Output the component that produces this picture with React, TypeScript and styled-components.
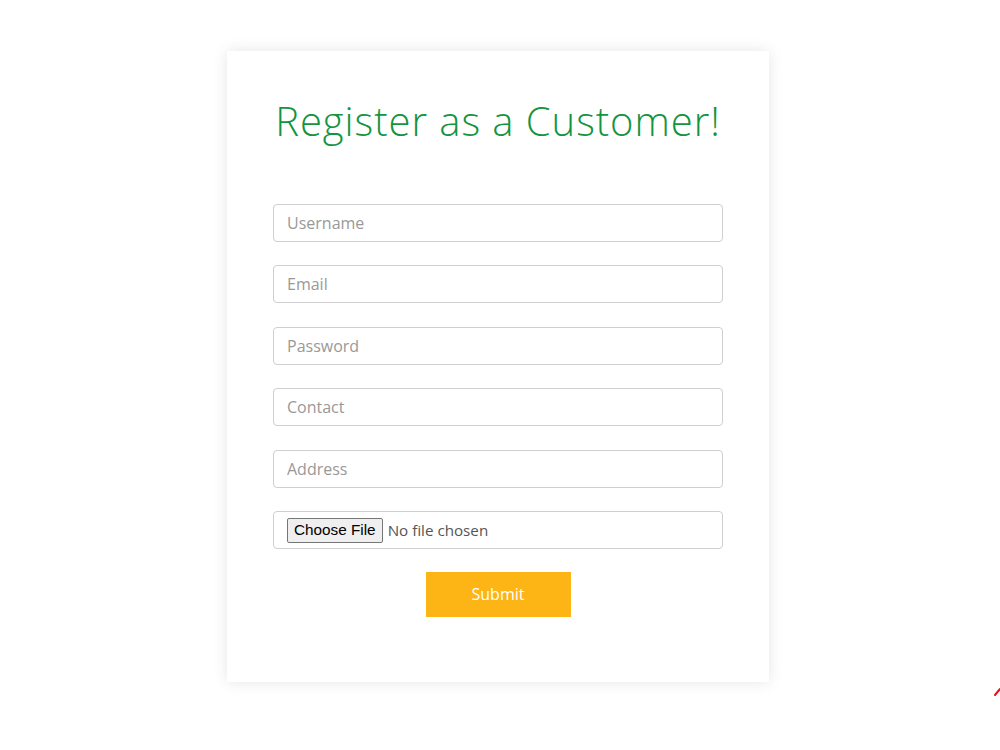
import React from 'react';
import styled, { createGlobalStyle } from 'styled-components';

const GlobalStyle = createGlobalStyle`
  html, body {
    margin: 0;
    padding: 0;
    background: #fff;
    font-family: "Open Sans", "Liberation Sans", sans-serif;
  }
`;

const Page = styled.div`
  position: relative;
  width: 1000px;
  height: 750px;
  overflow: hidden;
  display: flex;
  justify-content: center;
  align-items: flex-start;
  padding-top: 51px;
  padding-right: 4px;
  box-sizing: border-box;
`;

const Card = styled.div`
  width: 542px;
  height: 631px;
  box-sizing: border-box;
  background: #fff;
  box-shadow: 0 0 14px rgba(0, 0, 0, 0.1);
  padding: 46px 46px 0;
  display: flex;
  flex-direction: column;
`;

const Title = styled.h1`
  margin: 0 0 59px;
  text-align: center;
  font-family: "Open Sans", sans-serif;
  font-weight: 300;
  font-size: 40px;
  line-height: 48px;
  color: #14943f;
  letter-spacing: 0.95px;
`;

const Form = styled.form`
  display: flex;
  flex-direction: column;
  gap: 23.4px;
`;

const Input = styled.input`
  width: 100%;
  height: 38px;
  box-sizing: border-box;
  border: 1px solid #cfcfcf;
  border-radius: 4px;
  padding: 0 13px;
  font-family: "Open Sans", sans-serif;
  font-size: 16px;
  color: #333;
  outline: none;

  &::placeholder {
    color: #999;
  }
`;

const FileBox = styled.label`
  height: 38px;
  box-sizing: border-box;
  border: 1px solid #cfcfcf;
  border-radius: 4px;
  padding: 1px 13px 0;
  display: flex;
  align-items: center;
  gap: 5px;
`;

const FileButton = styled.span`
  display: inline-flex;
  align-items: center;
  height: 25px;
  box-sizing: border-box;
  padding: 0 6px;
  border: 1px solid #767676;
  border-radius: 2px;
  background: #efefef;
  font-family: "Liberation Sans", Arial, sans-serif;
  font-size: 15.3px;
  color: #000;
`;

const FileText = styled.span`
  font-family: "Open Sans", sans-serif;
  font-size: 15.2px;
  color: #555;
`;

const SubmitButton = styled.button`
  align-self: center;
  width: 145px;
  height: 45px;
  margin-top: -0.4px;
  border: none;
  background: #fdb515;
  color: #fff;
  font-family: "Open Sans", sans-serif;
  font-size: 16px;
  cursor: pointer;
`;

const CornerMark = styled.svg`
  position: absolute;
  right: 0;
  top: 686px;
`;

const fields = ['Username', 'Email', 'Password', 'Contact', 'Address'];

export default function App() {
  return (
    <>
      <GlobalStyle />
      <Page>
        <Card>
          <Title>Register as a Customer!</Title>
          <Form onSubmit={e => e.preventDefault()}>
            {fields.map(f => (
              <Input key={f} type={f === 'Password' ? 'password' : 'text'} placeholder={f} />
            ))}
            <FileBox>
              <FileButton>Choose File</FileButton>
              <FileText>No file chosen</FileText>
            </FileBox>
            <SubmitButton type="submit">Submit</SubmitButton>
          </Form>
        </Card>
        <CornerMark width="6" height="12" viewBox="0 0 6 12">
          <path d="M1 9 L6 3" stroke="#e5101a" strokeWidth="2" strokeLinecap="round" />
        </CornerMark>
      </Page>
    </>
  );
}
